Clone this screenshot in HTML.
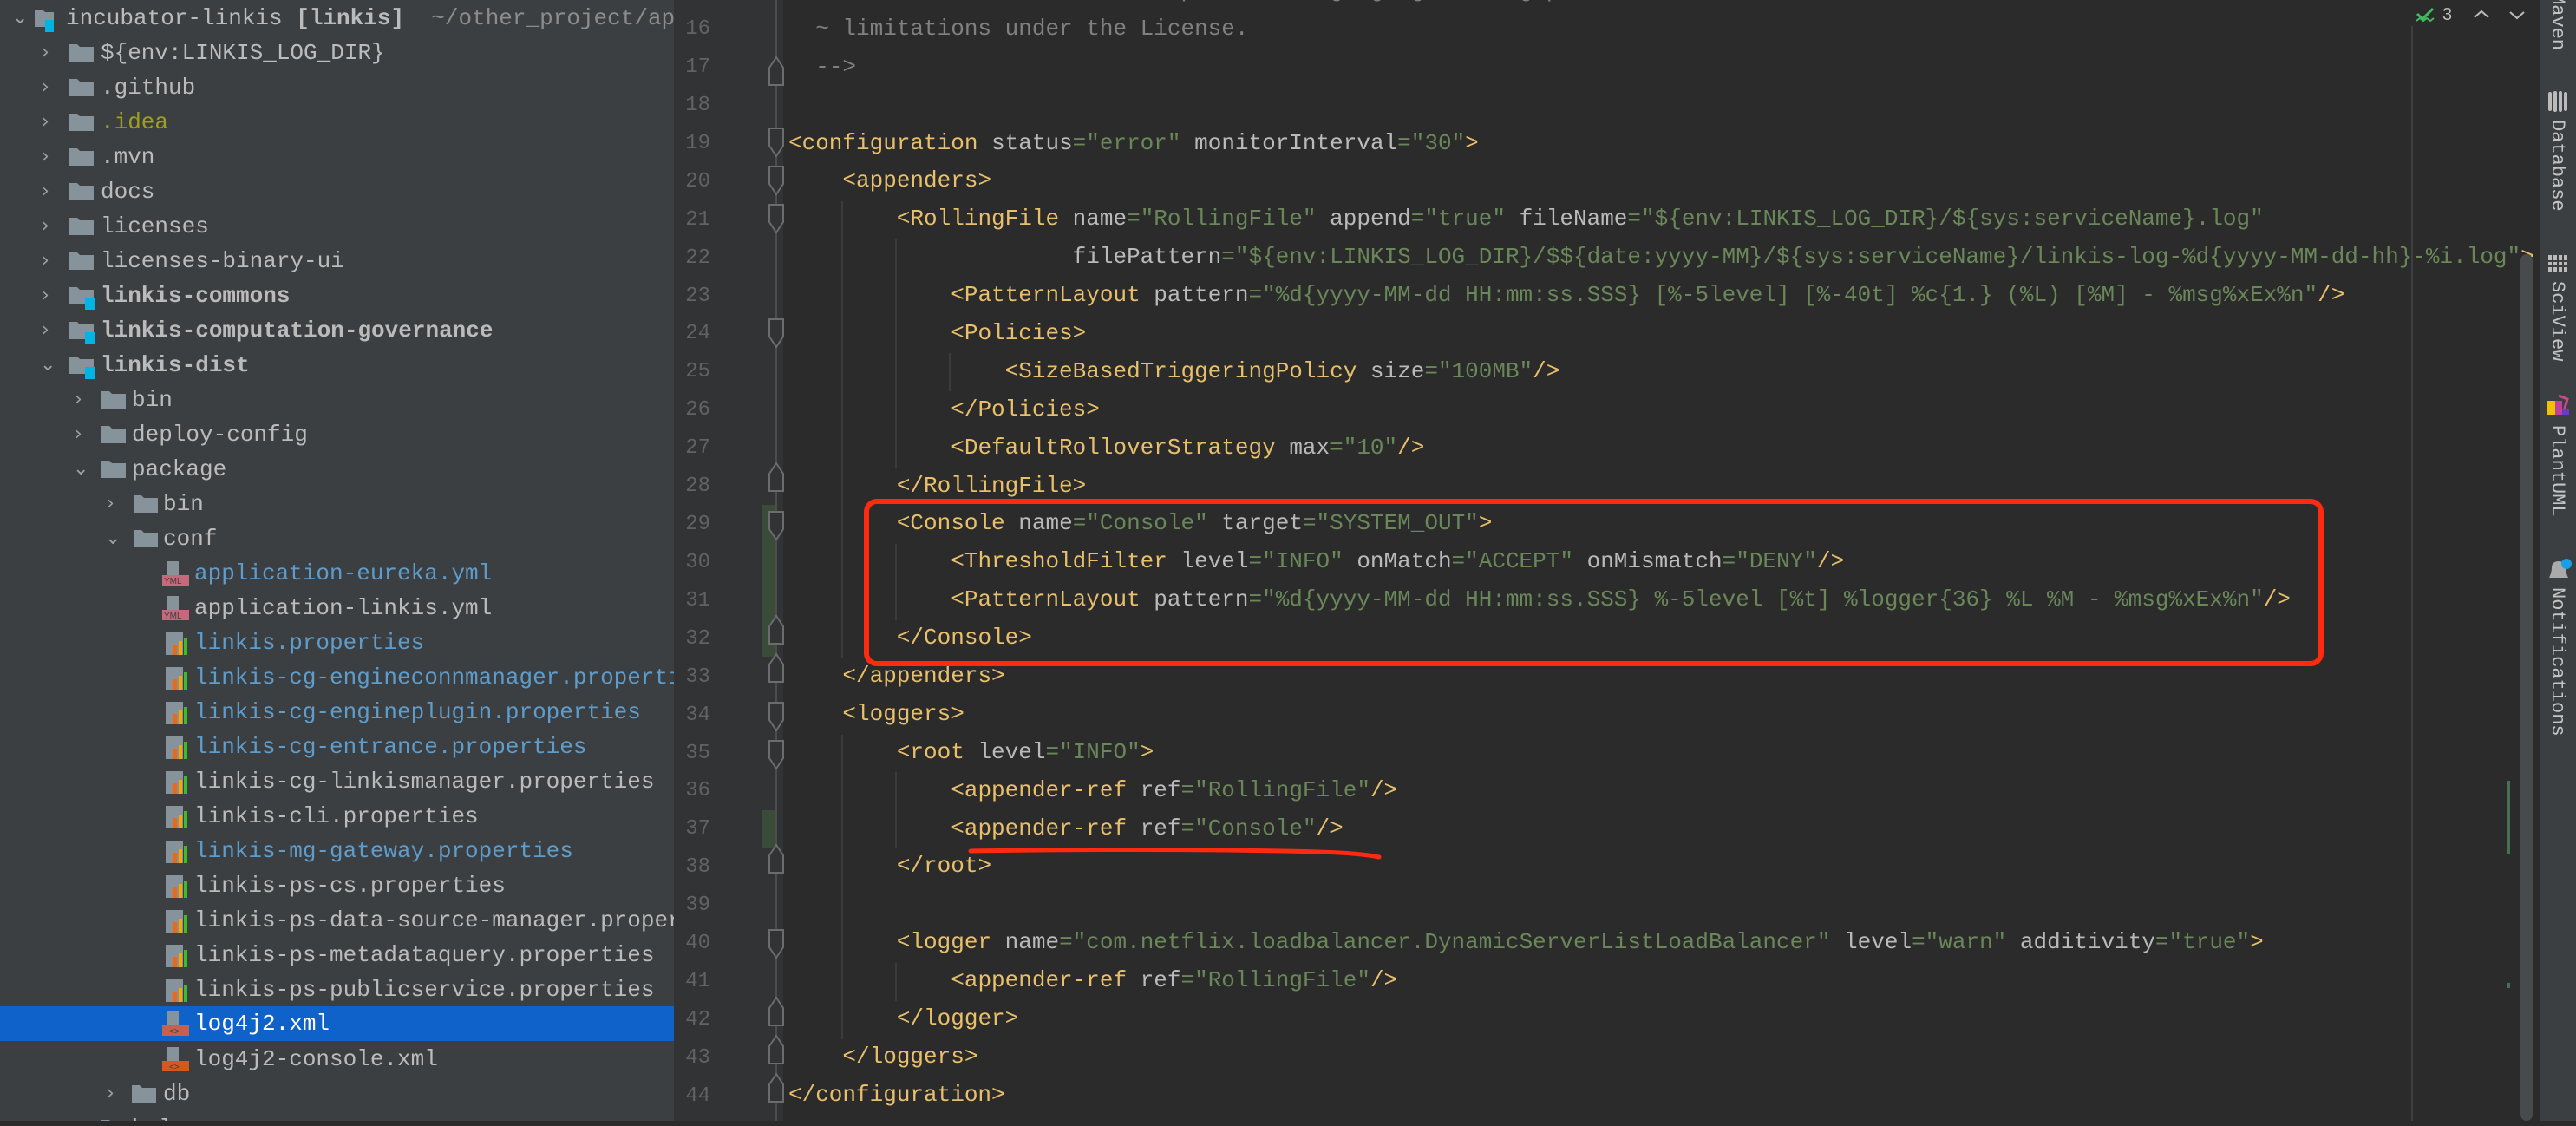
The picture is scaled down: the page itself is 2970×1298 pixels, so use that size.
<!DOCTYPE html>
<html><head><meta charset="utf-8"><style>
*{margin:0;padding:0;box-sizing:border-box}
body{width:2970px;height:1292px;overflow:hidden;background:#2b2b2b;position:relative;font-family:"Liberation Mono","DejaVu Sans Mono",monospace;font-size:26px}
#side{position:absolute;left:0;top:0;width:777px;height:1292px;background:#3c3f41;overflow:hidden}
.r{position:absolute;left:0;width:777px;height:40px;line-height:40px;color:#bbbbbb;white-space:pre}
.r .tx{position:absolute;top:0}
.r .ch{position:absolute;top:0;color:#a0a0a0;font-family:"DejaVu Sans",sans-serif;font-size:22px}
.r svg{position:absolute;top:10px}
.b{font-weight:bold}
.bl{color:#5e9ccb}
#gut{position:absolute;left:777px;top:0;width:126px;height:1292px;background:#313335}
.ln{position:absolute;left:777px;width:42px;text-align:right;color:#606366;font-size:24px;height:44px;line-height:44px}
#code{position:absolute;left:909px;top:-32px;right:50px;height:1330px;overflow:hidden}
.l{height:43.9px;line-height:43.9px;white-space:pre;color:#a9b7c6}
.t{color:#e8bf6a}.a{color:#bababa}.v{color:#6a8759}.c{color:#808080}
.g{position:absolute;width:2px;background:#393b3c}
#strip{position:absolute;left:2928px;top:0;width:42px;height:1292px;background:#3c3f41}
.vt{position:absolute;left:2936px;color:#c4c4c4;font-family:"Liberation Mono",monospace;font-size:22px;line-height:24px;writing-mode:vertical-rl;white-space:nowrap}
</style></head><body>
<div id="side">
<div class="r" style="top:1px"><span class="ch" style="left:14px">⌄</span><svg style="left:40px" width="28" height="26" viewBox="0 0 28 26"><path d="M0 0h9l3 3h10v17H0z" fill="#87939a"/><rect x="12" y="12" width="10" height="14" fill="#00b4e6"/></svg><span class="tx" style="left:76px">incubator-linkis <span class="b">[linkis]</span>  <span style="color:#8c8c8c">~/other_project/ap</span></span></div>
<div class="r" style="top:41px"><span class="ch" style="left:48px">›</span><svg style="left:80px" width="28" height="22" viewBox="0 0 28 22"><path d="M0 0h9l3 3h16v17H0z" fill="#87939a"/></svg><span class="tx" style="left:116px">${env:LINKIS_LOG_DIR}</span></div>
<div class="r" style="top:81px"><span class="ch" style="left:48px">›</span><svg style="left:80px" width="28" height="22" viewBox="0 0 28 22"><path d="M0 0h9l3 3h16v17H0z" fill="#87939a"/></svg><span class="tx" style="left:116px">.github</span></div>
<div class="r" style="top:121px"><span class="ch" style="left:48px">›</span><svg style="left:80px" width="28" height="22" viewBox="0 0 28 22"><path d="M0 0h9l3 3h16v17H0z" fill="#87939a"/></svg><span class="tx" style="left:116px;color:#9e9e1f">.idea</span></div>
<div class="r" style="top:161px"><span class="ch" style="left:48px">›</span><svg style="left:80px" width="28" height="22" viewBox="0 0 28 22"><path d="M0 0h9l3 3h16v17H0z" fill="#87939a"/></svg><span class="tx" style="left:116px">.mvn</span></div>
<div class="r" style="top:201px"><span class="ch" style="left:48px">›</span><svg style="left:80px" width="28" height="22" viewBox="0 0 28 22"><path d="M0 0h9l3 3h16v17H0z" fill="#87939a"/></svg><span class="tx" style="left:116px">docs</span></div>
<div class="r" style="top:241px"><span class="ch" style="left:48px">›</span><svg style="left:80px" width="28" height="22" viewBox="0 0 28 22"><path d="M0 0h9l3 3h16v17H0z" fill="#87939a"/></svg><span class="tx" style="left:116px">licenses</span></div>
<div class="r" style="top:281px"><span class="ch" style="left:48px">›</span><svg style="left:80px" width="28" height="22" viewBox="0 0 28 22"><path d="M0 0h9l3 3h16v17H0z" fill="#87939a"/></svg><span class="tx" style="left:116px">licenses-binary-ui</span></div>
<div class="r" style="top:321px"><span class="ch" style="left:48px">›</span><svg style="left:80px" width="30" height="26" viewBox="0 0 30 26"><path d="M0 0h9l3 3h16v17H0z" fill="#87939a"/><rect x="18" y="12" width="12" height="14" fill="#00b4e6"/></svg><span class="tx b" style="left:116px">linkis-commons</span></div>
<div class="r" style="top:361px"><span class="ch" style="left:48px">›</span><svg style="left:80px" width="30" height="26" viewBox="0 0 30 26"><path d="M0 0h9l3 3h16v17H0z" fill="#87939a"/><rect x="18" y="12" width="12" height="14" fill="#00b4e6"/></svg><span class="tx b" style="left:116px">linkis-computation-governance</span></div>
<div class="r" style="top:401px"><span class="ch" style="left:46px">⌄</span><svg style="left:80px" width="30" height="26" viewBox="0 0 30 26"><path d="M0 0h9l3 3h16v17H0z" fill="#87939a"/><rect x="18" y="12" width="12" height="14" fill="#00b4e6"/></svg><span class="tx b" style="left:116px">linkis-dist</span></div>
<div class="r" style="top:441px"><span class="ch" style="left:86px">›</span><svg style="left:117px" width="28" height="22" viewBox="0 0 28 22"><path d="M0 0h9l3 3h16v17H0z" fill="#87939a"/></svg><span class="tx" style="left:152px">bin</span></div>
<div class="r" style="top:481px"><span class="ch" style="left:86px">›</span><svg style="left:117px" width="28" height="22" viewBox="0 0 28 22"><path d="M0 0h9l3 3h16v17H0z" fill="#87939a"/></svg><span class="tx" style="left:152px">deploy-config</span></div>
<div class="r" style="top:521px"><span class="ch" style="left:84px">⌄</span><svg style="left:117px" width="28" height="22" viewBox="0 0 28 22"><path d="M0 0h9l3 3h16v17H0z" fill="#87939a"/></svg><span class="tx" style="left:152px">package</span></div>
<div class="r" style="top:561px"><span class="ch" style="left:123px">›</span><svg style="left:154px" width="28" height="22" viewBox="0 0 28 22"><path d="M0 0h9l3 3h16v17H0z" fill="#87939a"/></svg><span class="tx" style="left:188px">bin</span></div>
<div class="r" style="top:601px"><span class="ch" style="left:121px">⌄</span><svg style="left:154px" width="28" height="22" viewBox="0 0 28 22"><path d="M0 0h9l3 3h16v17H0z" fill="#87939a"/></svg><span class="tx" style="left:188px">conf</span></div>
<div class="r" style="top:641px"><svg style="left:187px;top:6px" width="32" height="30" viewBox="0 0 32 30"><path d="M5 0h14v16H5z" fill="#87939a"/><rect x="0" y="16" width="31" height="12" fill="#c8697b"/><text x="2" y="26" font-size="10" fill="#3c3f41" font-family="Liberation Sans">YML</text></svg><span class="tx bl" style="left:224px">application-eureka.yml</span></div>
<div class="r" style="top:681px"><svg style="left:187px;top:6px" width="32" height="30" viewBox="0 0 32 30"><path d="M5 0h14v16H5z" fill="#87939a"/><rect x="0" y="16" width="31" height="12" fill="#c8697b"/><text x="2" y="26" font-size="10" fill="#3c3f41" font-family="Liberation Sans">YML</text></svg><span class="tx" style="left:224px">application-linkis.yml</span></div>
<div class="r" style="top:721px"><svg style="left:191px;top:8px" width="28" height="26" viewBox="0 0 28 26"><path d="M0 0h20v26H0z" fill="#87939a"/><rect x="9" y="14" width="4" height="12" fill="#f26512"/><rect x="15" y="10" width="4" height="16" fill="#f5a800"/><rect x="21" y="6" width="4" height="20" fill="#3ebd27"/></svg><span class="tx bl" style="left:224px">linkis.properties</span></div>
<div class="r" style="top:761px"><svg style="left:191px;top:8px" width="28" height="26" viewBox="0 0 28 26"><path d="M0 0h20v26H0z" fill="#87939a"/><rect x="9" y="14" width="4" height="12" fill="#f26512"/><rect x="15" y="10" width="4" height="16" fill="#f5a800"/><rect x="21" y="6" width="4" height="20" fill="#3ebd27"/></svg><span class="tx bl" style="left:224px">linkis-cg-engineconnmanager.properties</span></div>
<div class="r" style="top:801px"><svg style="left:191px;top:8px" width="28" height="26" viewBox="0 0 28 26"><path d="M0 0h20v26H0z" fill="#87939a"/><rect x="9" y="14" width="4" height="12" fill="#f26512"/><rect x="15" y="10" width="4" height="16" fill="#f5a800"/><rect x="21" y="6" width="4" height="20" fill="#3ebd27"/></svg><span class="tx bl" style="left:224px">linkis-cg-engineplugin.properties</span></div>
<div class="r" style="top:841px"><svg style="left:191px;top:8px" width="28" height="26" viewBox="0 0 28 26"><path d="M0 0h20v26H0z" fill="#87939a"/><rect x="9" y="14" width="4" height="12" fill="#f26512"/><rect x="15" y="10" width="4" height="16" fill="#f5a800"/><rect x="21" y="6" width="4" height="20" fill="#3ebd27"/></svg><span class="tx bl" style="left:224px">linkis-cg-entrance.properties</span></div>
<div class="r" style="top:881px"><svg style="left:191px;top:8px" width="28" height="26" viewBox="0 0 28 26"><path d="M0 0h20v26H0z" fill="#87939a"/><rect x="9" y="14" width="4" height="12" fill="#f26512"/><rect x="15" y="10" width="4" height="16" fill="#f5a800"/><rect x="21" y="6" width="4" height="20" fill="#3ebd27"/></svg><span class="tx" style="left:224px">linkis-cg-linkismanager.properties</span></div>
<div class="r" style="top:921px"><svg style="left:191px;top:8px" width="28" height="26" viewBox="0 0 28 26"><path d="M0 0h20v26H0z" fill="#87939a"/><rect x="9" y="14" width="4" height="12" fill="#f26512"/><rect x="15" y="10" width="4" height="16" fill="#f5a800"/><rect x="21" y="6" width="4" height="20" fill="#3ebd27"/></svg><span class="tx" style="left:224px">linkis-cli.properties</span></div>
<div class="r" style="top:961px"><svg style="left:191px;top:8px" width="28" height="26" viewBox="0 0 28 26"><path d="M0 0h20v26H0z" fill="#87939a"/><rect x="9" y="14" width="4" height="12" fill="#f26512"/><rect x="15" y="10" width="4" height="16" fill="#f5a800"/><rect x="21" y="6" width="4" height="20" fill="#3ebd27"/></svg><span class="tx bl" style="left:224px">linkis-mg-gateway.properties</span></div>
<div class="r" style="top:1001px"><svg style="left:191px;top:8px" width="28" height="26" viewBox="0 0 28 26"><path d="M0 0h20v26H0z" fill="#87939a"/><rect x="9" y="14" width="4" height="12" fill="#f26512"/><rect x="15" y="10" width="4" height="16" fill="#f5a800"/><rect x="21" y="6" width="4" height="20" fill="#3ebd27"/></svg><span class="tx" style="left:224px">linkis-ps-cs.properties</span></div>
<div class="r" style="top:1041px"><svg style="left:191px;top:8px" width="28" height="26" viewBox="0 0 28 26"><path d="M0 0h20v26H0z" fill="#87939a"/><rect x="9" y="14" width="4" height="12" fill="#f26512"/><rect x="15" y="10" width="4" height="16" fill="#f5a800"/><rect x="21" y="6" width="4" height="20" fill="#3ebd27"/></svg><span class="tx" style="left:224px">linkis-ps-data-source-manager.properties</span></div>
<div class="r" style="top:1081px"><svg style="left:191px;top:8px" width="28" height="26" viewBox="0 0 28 26"><path d="M0 0h20v26H0z" fill="#87939a"/><rect x="9" y="14" width="4" height="12" fill="#f26512"/><rect x="15" y="10" width="4" height="16" fill="#f5a800"/><rect x="21" y="6" width="4" height="20" fill="#3ebd27"/></svg><span class="tx" style="left:224px">linkis-ps-metadataquery.properties</span></div>
<div class="r" style="top:1121px"><svg style="left:191px;top:8px" width="28" height="26" viewBox="0 0 28 26"><path d="M0 0h20v26H0z" fill="#87939a"/><rect x="9" y="14" width="4" height="12" fill="#f26512"/><rect x="15" y="10" width="4" height="16" fill="#f5a800"/><rect x="21" y="6" width="4" height="20" fill="#3ebd27"/></svg><span class="tx" style="left:224px">linkis-ps-publicservice.properties</span></div>
<div class="r" style="top:1160px;background:#0e62c9;color:#fff"><svg style="left:187px;top:6px" width="32" height="30" viewBox="0 0 32 30"><path d="M5 0h14v16H5z" fill="#87939a"/><rect x="0" y="16" width="31" height="12" fill="#c9604d"/><text x="8" y="26" font-size="10" fill="#3c3f41" font-family="Liberation Sans">&lt;&gt;</text></svg><span class="tx" style="left:224px">log4j2.xml</span></div>
<div class="r" style="top:1201px"><svg style="left:187px;top:6px" width="32" height="30" viewBox="0 0 32 30"><path d="M5 0h14v16H5z" fill="#87939a"/><rect x="0" y="16" width="31" height="12" fill="#d35a1d"/><text x="8" y="26" font-size="10" fill="#3c3f41" font-family="Liberation Sans">&lt;&gt;</text></svg><span class="tx" style="left:224px">log4j2-console.xml</span></div>
<div class="r" style="top:1241px"><span class="ch" style="left:123px">›</span><svg style="left:152px" width="28" height="22" viewBox="0 0 28 22"><path d="M0 0h9l3 3h16v17H0z" fill="#87939a"/></svg><span class="tx" style="left:188px">db</span></div>
<div class="r" style="top:1281px"><span class="ch" style="left:86px">›</span><svg style="left:117px" width="28" height="22" viewBox="0 0 28 22"><path d="M0 0h9l3 3h16v17H0z" fill="#87939a"/></svg><span class="tx" style="left:152px">helm</span></div>
</div>

<div id="gut"></div>
<div style="position:absolute;left:894px;top:0;width:2px;height:1292px;background:#4b4d4f"></div>
<div style="position:absolute;left:878px;top:582px;width:16px;height:175px;background:#384c38"></div>
<div style="position:absolute;left:878px;top:934px;width:16px;height:43px;background:#384c38"></div>

<div class="ln" style="top:12px">16</div><div class="ln" style="top:56px">17</div><div class="ln" style="top:100px">18</div><div class="ln" style="top:144px">19</div><div class="ln" style="top:188px">20</div><div class="ln" style="top:232px">21</div><div class="ln" style="top:276px">22</div><div class="ln" style="top:320px">23</div><div class="ln" style="top:363px">24</div><div class="ln" style="top:407px">25</div><div class="ln" style="top:451px">26</div><div class="ln" style="top:495px">27</div><div class="ln" style="top:539px">28</div><div class="ln" style="top:583px">29</div><div class="ln" style="top:627px">30</div><div class="ln" style="top:671px">31</div><div class="ln" style="top:715px">32</div><div class="ln" style="top:759px">33</div><div class="ln" style="top:803px">34</div><div class="ln" style="top:847px">35</div><div class="ln" style="top:890px">36</div><div class="ln" style="top:934px">37</div><div class="ln" style="top:978px">38</div><div class="ln" style="top:1022px">39</div><div class="ln" style="top:1066px">40</div><div class="ln" style="top:1110px">41</div><div class="ln" style="top:1154px">42</div><div class="ln" style="top:1198px">43</div><div class="ln" style="top:1242px">44</div>

<svg style="position:absolute;left:880px;top:0" width="30" height="1292">
<g fill="#313335" stroke="#6a6c6e" stroke-width="2">
<path d="M7 78l8-12 8 12v20H7z"/><path d="M7 148h16v20l-8 12-8-12z"/><path d="M7 192h16v20l-8 12-8-12z"/><path d="M7 236h16v20l-8 12-8-12z"/><path d="M7 368h16v20l-8 12-8-12z"/><path d="M7 546l8-12 8 12v20H7z"/><path d="M7 590h16v20l-8 12-8-12z"/><path d="M7 722l8-12 8 12v20H7z"/><path d="M7 766l8-12 8 12v20H7z"/><path d="M7 810h16v20l-8 12-8-12z"/><path d="M7 854h16v20l-8 12-8-12z"/><path d="M7 986l8-12 8 12v20H7z"/><path d="M7 1072h16v20l-8 12-8-12z"/><path d="M7 1162l8-12 8 12v20H7z"/><path d="M7 1206l8-12 8 12v20H7z"/><path d="M7 1250l8-12 8 12v20H7z"/>
</g></svg>

<div class="g" style="left:970px;top:232px;height:527px"></div>
<div class="g" style="left:970px;top:847px;height:351px"></div>
<div class="g" style="left:1032px;top:276px;height:263px"></div>
<div class="g" style="left:1032px;top:627px;height:88px"></div>
<div class="g" style="left:1032px;top:890px;height:88px"></div>
<div class="g" style="left:1032px;top:1110px;height:44px"></div>
<div class="g" style="left:1094px;top:407px;height:44px"></div>
<div style="position:absolute;left:2780px;top:30px;width:2px;height:1262px;background:#3d3f41"></div>

<div id="code">
<div class="l c">  ~ See the License for the specific language governing permissions and</div>
<div class="l c">  ~ limitations under the License.</div>
<div class="l c">  --&gt;</div>
<div class="l"> </div>
<div class="l"><span class="t">&lt;configuration</span> <span class="a">status</span><span class="v">="error"</span> <span class="a">monitorInterval</span><span class="v">="30"</span><span class="t">&gt;</span></div>
<div class="l">    <span class="t">&lt;appenders&gt;</span></div>
<div class="l">        <span class="t">&lt;RollingFile</span> <span class="a">name</span><span class="v">="RollingFile"</span> <span class="a">append</span><span class="v">="true"</span> <span class="a">fileName</span><span class="v">="${env:LINKIS_LOG_DIR}/${sys:serviceName}.log"</span></div>
<div class="l">                     <span class="a">filePattern</span><span class="v">="${env:LINKIS_LOG_DIR}/$${date:yyyy-MM}/${sys:serviceName}/linkis-log-%d{yyyy-MM-dd-hh}-%i.log"</span><span class="t">&gt;</span></div>
<div class="l">            <span class="t">&lt;PatternLayout</span> <span class="a">pattern</span><span class="v">="%d{yyyy-MM-dd HH:mm:ss.SSS} [%-5level] [%-40t] %c{1.} (%L) [%M] - %msg%xEx%n"</span><span class="t">/&gt;</span></div>
<div class="l">            <span class="t">&lt;Policies&gt;</span></div>
<div class="l">                <span class="t">&lt;SizeBasedTriggeringPolicy</span> <span class="a">size</span><span class="v">="100MB"</span><span class="t">/&gt;</span></div>
<div class="l">            <span class="t">&lt;/Policies&gt;</span></div>
<div class="l">            <span class="t">&lt;DefaultRolloverStrategy</span> <span class="a">max</span><span class="v">="10"</span><span class="t">/&gt;</span></div>
<div class="l">        <span class="t">&lt;/RollingFile&gt;</span></div>
<div class="l">        <span class="t">&lt;Console</span> <span class="a">name</span><span class="v">="Console"</span> <span class="a">target</span><span class="v">="SYSTEM_OUT"</span><span class="t">&gt;</span></div>
<div class="l">            <span class="t">&lt;ThresholdFilter</span> <span class="a">level</span><span class="v">="INFO"</span> <span class="a">onMatch</span><span class="v">="ACCEPT"</span> <span class="a">onMismatch</span><span class="v">="DENY"</span><span class="t">/&gt;</span></div>
<div class="l">            <span class="t">&lt;PatternLayout</span> <span class="a">pattern</span><span class="v">="%d{yyyy-MM-dd HH:mm:ss.SSS} %-5level [%t] %logger{36} %L %M - %msg%xEx%n"</span><span class="t">/&gt;</span></div>
<div class="l">        <span class="t">&lt;/Console&gt;</span></div>
<div class="l">    <span class="t">&lt;/appenders&gt;</span></div>
<div class="l">    <span class="t">&lt;loggers&gt;</span></div>
<div class="l">        <span class="t">&lt;root</span> <span class="a">level</span><span class="v">="INFO"</span><span class="t">&gt;</span></div>
<div class="l">            <span class="t">&lt;appender-ref</span> <span class="a">ref</span><span class="v">="RollingFile"</span><span class="t">/&gt;</span></div>
<div class="l">            <span class="t">&lt;appender-ref</span> <span class="a">ref</span><span class="v">="Console"</span><span class="t">/&gt;</span></div>
<div class="l">        <span class="t">&lt;/root&gt;</span></div>
<div class="l"> </div>
<div class="l">        <span class="t">&lt;logger</span> <span class="a">name</span><span class="v">="com.netflix.loadbalancer.DynamicServerListLoadBalancer"</span> <span class="a">level</span><span class="v">="warn"</span> <span class="a">additivity</span><span class="v">="true"</span><span class="t">&gt;</span></div>
<div class="l">            <span class="t">&lt;appender-ref</span> <span class="a">ref</span><span class="v">="RollingFile"</span><span class="t">/&gt;</span></div>
<div class="l">        <span class="t">&lt;/logger&gt;</span></div>
<div class="l">    <span class="t">&lt;/loggers&gt;</span></div>
<div class="l"><span class="t">&lt;/configuration&gt;</span></div>
</div>

<div style="position:absolute;left:2906px;top:293px;width:14px;height:999px;background:#484a4c;border-radius:7px"></div>
<div style="position:absolute;left:2890px;top:900px;width:4px;height:85px;background:#447152"></div>
<div style="position:absolute;left:2890px;top:1133px;width:4px;height:6px;background:#447152"></div>

<svg style="position:absolute;left:2780px;top:0" width="148" height="30">
<path d="M7 16l6 6 12-12" stroke="#3ebd60" stroke-width="3" fill="none"/>
<path d="M6 24l4-3 4 3 4-3 4 3 4-3" stroke="#3ebd60" stroke-width="2" fill="none"/>
<text x="36" y="23" font-size="20" fill="#bbbbbb" font-family="Liberation Sans">3</text>
<path d="M73 20l8-7 8 7" stroke="#bbbbbb" stroke-width="2" fill="none"/>
<path d="M114 14l8 7 8-7" stroke="#bbbbbb" stroke-width="2" fill="none"/>
</svg>

<div id="strip"></div>
<div class="vt" style="top:-8px">Maven</div>
<div class="vt" style="top:138px">Database</div>
<div class="vt" style="top:324px">SciView</div>
<div class="vt" style="top:490px">PlantUML</div>
<div class="vt" style="top:677px">Notifications</div>
<svg style="position:absolute;left:2936px;top:104px" width="26" height="28"><g fill="#bbbbbb"><rect x="2" y="2" width="4" height="22" rx="2"/><rect x="8" y="1" width="4" height="24" rx="2"/><rect x="14" y="1" width="4" height="24" rx="2"/><rect x="20" y="2" width="4" height="22" rx="2"/></g></svg>
<svg style="position:absolute;left:2936px;top:292px" width="26" height="24"><g fill="#bbbbbb"><rect x="2" y="2" width="4" height="20"/><rect x="8" y="2" width="4" height="20"/><rect x="14" y="2" width="4" height="20"/><rect x="20" y="2" width="4" height="20"/></g><g fill="#3c3f41"><rect x="0" y="8" width="26" height="2"/><rect x="0" y="14" width="26" height="2"/></g></svg>
<svg style="position:absolute;left:2934px;top:454px" width="30" height="30"><rect x="2" y="8" width="14" height="16" fill="#f2c200"/><rect x="12" y="8" width="8" height="16" fill="#c040a0"/><path d="M16 2l10 4-4 14" stroke="#c84a8a" stroke-width="3" fill="none"/><rect x="20" y="18" width="8" height="6" fill="#6a3ac8"/></svg>
<svg style="position:absolute;left:2936px;top:642px" width="30" height="32"><path d="M3 24c2-4 3-8 3-12 0-5 4-7 8-7s8 2 8 7c0 4 1 8 3 12z" fill="#aaaaaa"/><circle cx="23" cy="8" r="6" fill="#1a9ee8"/></svg>

<svg style="position:absolute;left:0;top:0" width="2970" height="1292">
<rect x="999" y="578" width="1677" height="187" rx="12" fill="none" stroke="#ff2a10" stroke-width="6"/>
<path d="M1119 981 C1300 978 1450 980 1520 982 C1560 983 1580 986 1590 988" stroke="#ff2a10" stroke-width="5" fill="none" stroke-linecap="round"/>
</svg>
</body></html>
